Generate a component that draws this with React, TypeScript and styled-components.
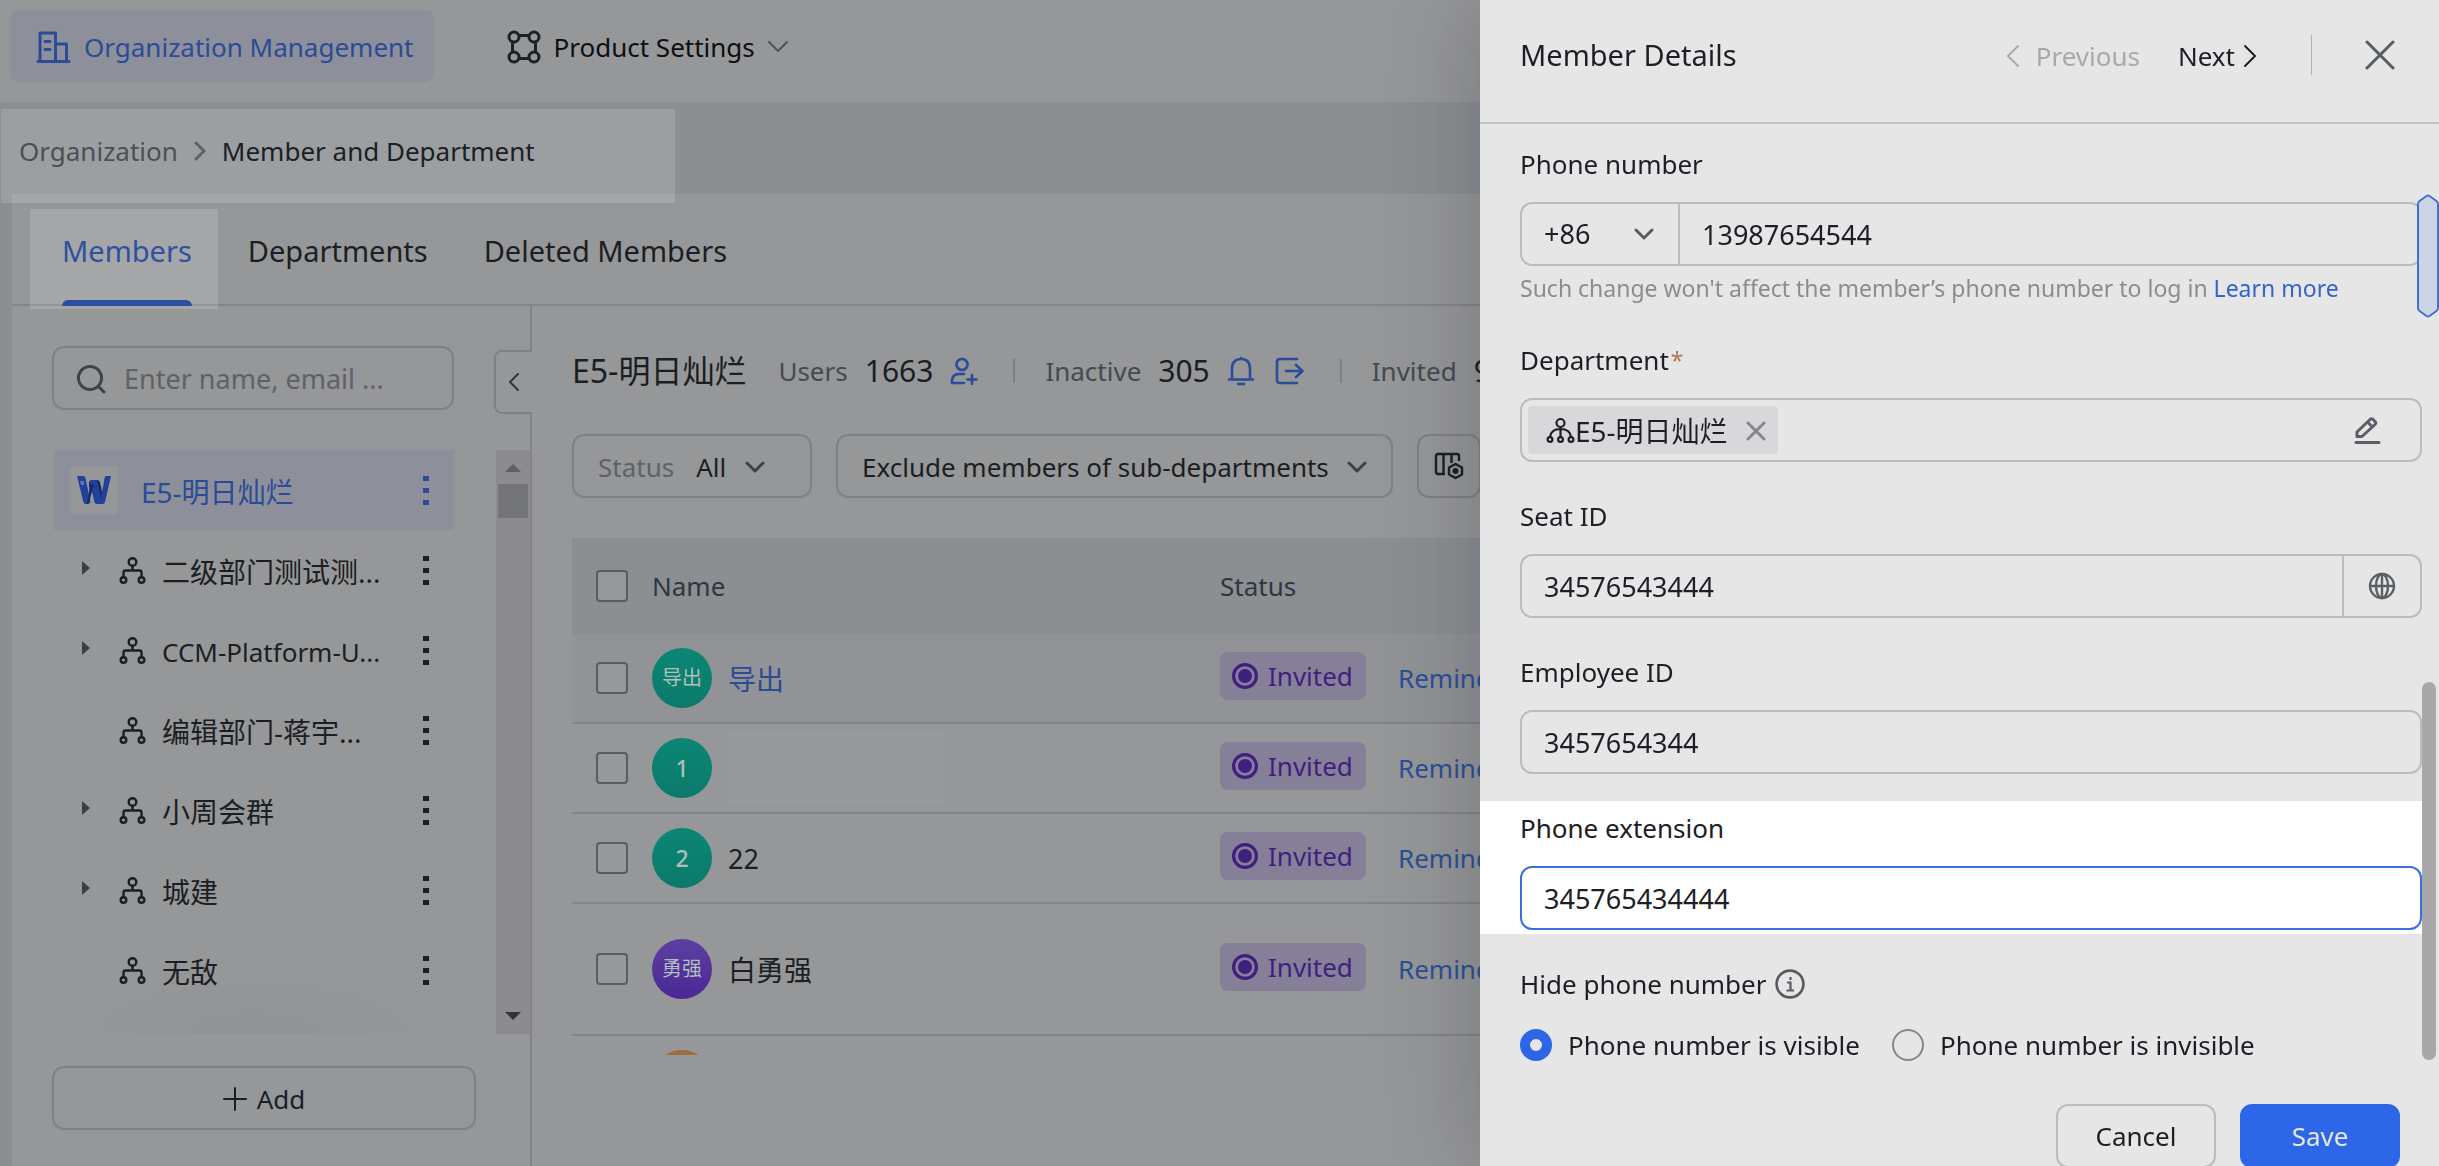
import React from 'react';
import styled, { createGlobalStyle, css } from 'styled-components';

const color = {
  surface: '#969798',
  canvas: '#8b8f92',
  selected: '#8d909b',
  ink: '#1b1e23',
  slate: '#2e3641',
  grey: '#454a50',
  muted: '#5e6267',
  line: '#7f8184',
  rule: '#838488',
  blue: '#2b4b97',
  chevron: '#3d4248',
  drawer: '#e6e6e6',
  drawerInk: '#1c2026',
  drawerLine: '#bbbcbe',
  primary: '#2e66e8',
};

const GlobalStyle = createGlobalStyle`
  * { box-sizing: border-box; }
  body {
    margin: 0;
    background: ${color.canvas};
    color: ${color.ink};
    font-family: "Noto Sans", "Noto Sans CJK SC", sans-serif;
    font-size: 26px;
    line-height: 40px;
  }
  button, input, select { font: inherit; color: inherit; }
  button { cursor: pointer; }
  svg { display: block; flex: none; }
`;

const Page = styled.div`
  display: flex;
  flex-direction: column;
  height: 100vh;
  overflow: hidden;
`;

/* ---------- top bar ---------- */

const TopBar = styled.nav`
  display: flex;
  gap: 48px;
  height: 102px;
  flex: none;
  padding: 10px;
  background: ${color.surface};
`;

const NavButton = styled.button<{ $active?: boolean }>`
  display: flex;
  align-items: center;
  gap: 13px;
  height: 72px;
  padding: 2px 20px 0 25px;
  border: 0;
  border-radius: 8px;
  background: ${p => (p.$active ? color.selected : 'transparent')};
  color: ${p => (p.$active ? color.blue : '#0d0f12')};
  white-space: nowrap;
`;

const NavChevron = styled.span`
  color: #50545a;
`;

const Breadcrumb = styled.div`
  position: relative;
  isolation: isolate;
  display: flex;
  align-items: center;
  gap: 16px;
  height: 92px;
  flex: none;
  padding: 6px 19px 0;
  color: ${color.muted};
`;

const CrumbLink = styled.a`
  color: #4b5055;
  text-decoration: none;
`;

const CrumbHere = styled.span`
  color: ${color.ink};
`;

const Glow = styled.div`
  position: absolute;
  z-index: -1;
  background: rgba(255, 255, 255, 0.15);
  pointer-events: none;
`;

const CrumbGlow = styled(Glow)`
  top: 7px;
  left: 1px;
  width: 674px;
  height: 94px;
`;

const TabGlow = styled(Glow)`
  top: 15px;
  left: -32px;
  right: -26px;
  bottom: -5px;
`;

/* ---------- panel ---------- */

const Panel = styled.div`
  display: flex;
  flex-direction: column;
  flex: 1;
  min-height: 0;
  margin-left: 12px;
  background: ${color.surface};
`;

const Tabs = styled.div`
  display: flex;
  gap: 56px;
  height: 112px;
  flex: none;
  padding-left: 50px;
  border-bottom: 2px solid #858688;
`;

const Tab = styled.button<{ $active?: boolean }>`
  position: relative;
  isolation: isolate;
  height: 110px;
  padding: 4px 0 0;
  border: 0;
  background: none;
  font-size: 29px;
  color: ${p => (p.$active ? '#2f51a0' : color.ink)};
  ${p => p.$active && css`
    &::after {
      content: '';
      position: absolute;
      left: 0;
      right: 0;
      bottom: -2px;
      height: 6px;
      border-radius: 6px 6px 0 0;
      background: #2b4f9f;
    }
  `}
`;

const Columns = styled.div`
  display: flex;
  flex: 1;
  min-height: 0;
`;

/* ---------- sidebar ---------- */

const Sidebar = styled.aside`
  position: relative;
  display: flex;
  flex-direction: column;
  width: 520px;
  flex: none;
  padding: 40px 0 36px 40px;
  border-right: 2px solid ${color.rule};
`;

const SearchBox = styled.label`
  display: flex;
  align-items: center;
  gap: 18px;
  width: 402px;
  height: 64px;
  flex: none;
  padding: 2px 24px 0 22px;
  border: 2px solid ${color.line};
  border-radius: 12px;
  color: #3f4348;
`;

const BareInput = styled.input`
  flex: 1;
  min-width: 0;
  padding: 0;
  border: 0;
  outline: 0;
  background: none;
  font-size: 27px;
  &::placeholder { color: ${color.muted}; opacity: 1; }
`;

const CollapseButton = styled.button`
  position: absolute;
  top: 44px;
  right: -2px;
  display: flex;
  align-items: center;
  width: 38px;
  height: 64px;
  padding: 0 0 0 13px;
  border: 2px solid ${color.line};
  border-right: 0;
  border-radius: 8px 0 0 8px;
  background: ${color.surface};
  color: #33363a;
`;

const TreeArea = styled.div`
  display: flex;
  justify-content: space-between;
  flex: 1;
  min-height: 0;
  margin: 40px 0 32px;
  padding-left: 2px;
`;

const Tree = styled.ul`
  width: 400px;
  margin: 0;
  padding: 0;
  list-style: none;
  overflow: hidden;
  background: radial-gradient(ellipse 60% 80px at 50% 100%, #909397, rgba(150, 151, 152, 0));
`;

const TreeRow = styled.li<{ $active?: boolean }>`
  display: flex;
  align-items: center;
  height: 80px;
  padding: 0 25px 0 ${p => (p.$active ? 16 : 28)}px;
  background: ${p => (p.$active ? color.selected : 'transparent')};
  color: ${p => (p.$active ? color.blue : color.ink)};
`;

const Caret = styled.span<{ $open: boolean }>`
  width: 8px;
  margin: 0 29px 4px 0;
  border-left: 8px solid #394048;
  border-top: 7px solid transparent;
  border-bottom: 7px solid transparent;
  visibility: ${p => (p.$open ? 'visible' : 'hidden')};
`;

const TreeName = styled.span<{ $cjk?: boolean; $root?: boolean }>`
  flex: 1;
  margin-left: ${p => (p.$root ? 23 : 16)}px;
  padding-top: 3px;
  font-size: ${p => (p.$cjk ? 28 : 26)}px;
  white-space: nowrap;
`;

const LogoTile = styled.span`
  display: flex;
  align-items: center;
  justify-content: center;
  width: 48px;
  height: 48px;
  border-radius: 4px;
  background: ${color.surface};
`;

const DotsButton = styled.button`
  padding: 0;
  border: 0;
  background: none;
`;

const ScrollRail = styled.div`
  display: flex;
  flex-direction: column;
  align-items: center;
  width: 34px;
  padding: 14px 0;
  background: #8c8b8d;
`;

const ScrollBlock = styled.div`
  width: 30px;
  height: 34px;
  margin: 12px 0 auto;
  background: #727476;
`;

const AddButton = styled.button`
  display: flex;
  align-items: center;
  justify-content: center;
  gap: 10px;
  width: 424px;
  height: 64px;
  flex: none;
  padding: 2px 0 0;
  border: 2px solid ${color.line};
  border-radius: 12px;
  background: none;
`;

/* ---------- main ---------- */

const Main = styled.main`
  display: flex;
  flex-direction: column;
  flex: 1;
  gap: 40px;
  min-width: 0;
  padding: 40px 24px 111px 40px;
  overflow: hidden;
`;

const Stats = styled.div`
  display: flex;
  align-items: center;
  height: 48px;
  flex: none;
  padding-top: 2px;
  white-space: nowrap;
`;

const DeptTitle = styled.h1`
  margin: 0 32px 0 0;
  font-size: 32px;
  font-weight: 400;
`;

const Stat = styled.div`
  display: flex;
  align-items: center;
  gap: 17px;
  color: ${color.grey};
  & + & {
    margin-left: 32px;
    padding-left: 32px;
    background: linear-gradient(#7e8083, #7e8083) left center / 2px 24px no-repeat;
  }
`;

const StatValue = styled.strong`
  font-size: 30px;
  font-weight: 400;
  color: ${color.ink};
`;

const IconButton = styled.button`
  padding: 0;
  border: 0;
  background: none;
  color: inherit;
`;

const StatIcon = styled(IconButton)`
  margin-right: 3px;
  color: #2b4b9c;
`;

const Filters = styled.div`
  display: flex;
  gap: 24px;
  flex: none;
`;

const SelectBox = styled.label`
  display: flex;
  align-items: center;
  gap: 18px;
  height: 64px;
  padding: 2px 24px 0;
  border: 2px solid ${color.line};
  border-radius: 12px;
  color: ${color.chevron};
`;

const StatusBox = styled(SelectBox)`
  width: 240px;
`;

const FilterName = styled.span`
  margin-right: 4px;
  color: ${color.muted};
`;

const PlainSelect = styled.select`
  appearance: none;
  padding: 0;
  border: 0;
  outline: 0;
  background: none;
  color: ${color.ink};
`;

const SquareButton = styled.button`
  display: flex;
  align-items: center;
  justify-content: center;
  width: 64px;
  height: 64px;
  padding: 0;
  border: 2px solid ${color.line};
  border-radius: 12px;
  background: none;
`;

const TableArea = styled.div`
  flex: 1;
  min-height: 0;
  overflow: hidden;
`;

const Table = styled.table`
  width: 100%;
  border-collapse: separate;
  border-spacing: 0;
  table-layout: fixed;
  text-align: left;
`;

const HeadCell = styled.th`
  height: 96px;
  padding: 0;
  background: #8b8f92;
  color: ${color.slate};
  font-weight: 400;
`;

const Row = styled.tr<{ $hover?: boolean; $tall?: boolean }>`
  background: ${p => (p.$hover ? '#919396' : 'transparent')};
  & > td { height: ${p => (p.$tall ? 132 : 90)}px; }
`;

const Cell = styled.td`
  padding: 0;
  border-bottom: 2px solid ${color.rule};
`;

const Check = styled.input`
  display: block;
  appearance: none;
  width: 32px;
  height: 32px;
  margin: 0 0 0 24px;
  border: 2px solid #5a5c63;
  border-radius: 4px;
  background: #979899;
`;

const Person = styled.div`
  display: flex;
  align-items: center;
  gap: 16px;
`;

const Avatar = styled.span<{ $tone: string; $cjk?: boolean }>`
  display: flex;
  align-items: center;
  justify-content: center;
  width: 60px;
  height: 60px;
  border-radius: 50%;
  background: ${p => p.$tone};
  color: #aebfbe;
  font-size: ${p => (p.$cjk ? 20 : 23)}px;
  font-weight: ${p => (p.$cjk ? 400 : 500)};
`;

const PersonName = styled.span<{ $link?: boolean; $cjk?: boolean }>`
  padding-top: 2px;
  font-size: ${p => (p.$cjk ? 28 : 27)}px;
  color: ${p => (p.$link ? '#2d4a96' : color.ink)};
`;

const Blank = styled.span`
  width: 216px;
  height: 70px;
  background: #98999a;
`;

const Badge = styled.span`
  display: flex;
  align-items: center;
  gap: 10px;
  width: 146px;
  height: 48px;
  margin-bottom: 4px;
  padding: 0 12px;
  border-radius: 8px;
  background: #857f97;
  color: #3f1f80;
`;

const TextLink = styled.a`
  color: #2b4f98;
  text-decoration: none;
`;

/* ---------- drawer ---------- */

const Drawer = styled.section`
  position: fixed;
  top: 0;
  right: 0;
  bottom: 0;
  z-index: 2;
  width: 959px;
  max-width: 100%;
  overflow: hidden;
  background: ${color.drawer};
  color: ${color.drawerInk};
  box-shadow: 0 0 96px rgba(30, 30, 45, 0.26);
`;

const DrawerHead = styled.header`
  display: flex;
  align-items: center;
  height: 124px;
  padding: 0 44px 12px 40px;
  border-bottom: 2px solid #c4c4c5;
`;

const DrawerTitle = styled.h2`
  margin: 0 auto 0 0;
  font-size: 29px;
  font-weight: 400;
`;

const StepButton = styled.button`
  display: flex;
  align-items: center;
  gap: 8px;
  margin-right: 38px;
  padding: 2px 0 0;
  border: 0;
  background: none;
  &:disabled { gap: 16px; color: #a8a9ab; }
`;

const HeadRule = styled.span`
  width: 1px;
  height: 40px;
  margin: 0 53px 0 16px;
  background: #b0b1b2;
`;

const CloseButton = styled(IconButton)`
  color: #575b62;
`;

const Form = styled.form`
  display: flex;
  flex-direction: column;
  gap: 34px;
  padding: 20px 17px 0 40px;
`;

const Field = styled.div<{ $spotlight?: boolean }>`
  ${p => p.$spotlight && css`
    margin: -7px -4px -4px -40px;
    padding: 7px 4px 4px 40px;
    background: #ffffff;
  `}
`;

const FieldLabel = styled.label`
  display: flex;
  align-items: center;
  margin-bottom: 18px;
`;

const Required = styled.span`
  margin-left: 2px;
  font-size: 23px;
  color: #b5764f;
`;

const Box = styled.div<{ $focus?: boolean }>`
  display: flex;
  align-items: center;
  height: 64px;
  border: 2px solid ${p => (p.$focus ? '#3a6fe0' : color.drawerLine)};
  border-radius: 12px;
`;

const FieldInput = styled(BareInput)`
  height: 60px;
  padding: 0 22px;
`;

const CodeSelect = styled.label`
  display: flex;
  align-items: center;
  justify-content: space-between;
  width: 158px;
  height: 60px;
  padding: 0 24px 0 22px;
  border-right: 2px solid ${color.drawerLine};
  color: #575b62;
`;

const DrawerSelect = styled(PlainSelect)`
  font-size: 27px;
  color: ${color.drawerInk};
`;

const Helper = styled.p`
  margin: 4px 0 0;
  font-size: 23px;
  line-height: 36px;
  color: #8c8c8d;
`;

const HelperLink = styled.a`
  color: #3464c9;
  text-decoration: none;
`;

const Chip = styled.span`
  display: flex;
  align-items: center;
  height: 48px;
  margin: 0 auto 0 6px;
  padding: 2px 12px 0 18px;
  border-radius: 4px;
  background: #d8d8da;
  font-size: 28px;
`;

const ChipRemove = styled(IconButton)`
  margin-left: 18px;
  color: #868890;
`;

const EditButton = styled(IconButton)`
  margin-right: 38px;
  color: #5b5f66;
`;

const GlobeButton = styled(IconButton)`
  display: flex;
  align-items: center;
  justify-content: center;
  width: 78px;
  height: 60px;
  border-left: 2px solid ${color.drawerLine};
  color: #5b5f66;
`;

const FieldSet = styled.fieldset`
  min-width: 0;
  margin: 0;
  padding: 0;
  border: 0;
`;

const Legend = styled.legend`
  display: flex;
  align-items: center;
  gap: 8px;
  margin-bottom: 18px;
  padding: 0;
`;

const Radios = styled.div`
  display: flex;
  gap: 32px;
`;

const RadioLabel = styled.label`
  display: flex;
  align-items: center;
  gap: 16px;
  height: 46px;
`;

const Radio = styled.input`
  appearance: none;
  width: 32px;
  height: 32px;
  margin: 0;
  border: 2px solid #85878c;
  border-radius: 50%;
  background: ${color.drawer};
  &:checked { border: 10px solid ${color.primary}; }
`;

const Footer = styled.footer`
  display: flex;
  justify-content: flex-end;
  gap: 24px;
  margin: 2px 22px 0 0;
`;

const FooterButton = styled.button<{ $primary?: boolean }>`
  width: 160px;
  height: 64px;
  padding: 0;
  border: 2px solid ${p => (p.$primary ? color.primary : color.drawerLine)};
  border-radius: 12px;
  background: ${p => (p.$primary ? color.primary : 'transparent')};
  color: ${p => (p.$primary ? color.drawer : color.drawerInk)};
`;

const DrawerScroll = styled.div`
  position: absolute;
  top: 682px;
  right: 3px;
  width: 14px;
  height: 378px;
  border-radius: 7px;
  background: #a8a8aa;
`;

const Handle = styled.svg`
  position: absolute;
  top: 194px;
  right: 0;
`;

/* ---------- drawings ---------- */

type StrokeProps = { d: string; w: number; h: number; s?: number };

const Stroke = ({ d, w, h, s = 3 }: StrokeProps) => (
  <svg width={w} height={h} viewBox={`0 0 ${w} ${h}`} fill="none" stroke="currentColor" strokeWidth={s} strokeLinecap="round" strokeLinejoin="round" aria-hidden="true">
    <path d={d} />
  </svg>
);

const ChevronDown = () => <Stroke w={20} h={12} d="M2 2l8 8 8-8" />;

const BuildingIcon = () => (
  <Stroke w={36} h={34} s={3} d="M3 31.500h31M5 31V3h15.500v28M20.500 14h11V31M10 11.500h5M10 19.500h5" />
);

const NodesIcon = () => (
  <svg width="34" height="34" viewBox="0 0 34 34" fill="none" stroke="#1d2025" strokeWidth="3" aria-hidden="true">
    <circle cx="7" cy="7" r="5" /><circle cx="27" cy="7" r="5" /><circle cx="7" cy="27" r="5" /><circle cx="27" cy="27" r="5" />
    <path d="M12 5.500h10M12 28.500h10M5.500 12v10M28.500 12v10" />
  </svg>
);

const DeptIcon = () => (
  <svg width="27" height="28" viewBox="0 0 27 28" fill="none" stroke="currentColor" strokeWidth="2.400" aria-hidden="true">
    <circle cx="13.500" cy="6" r="3.800" /><circle cx="4.500" cy="24" r="2.800" /><circle cx="22.500" cy="24" r="2.800" />
    <path d="M13.500 10v4.500M4.500 21v-4.500q0-2 2-2h14q2 0 2 2V21" />
  </svg>
);

const ChipIcon = () => (
  <svg width="29" height="28" viewBox="0 0 29 28" fill="none" stroke="currentColor" strokeWidth="2.200" aria-hidden="true">
    <circle cx="14.500" cy="6" r="4" /><circle cx="4" cy="22.500" r="2.400" /><circle cx="14.500" cy="22.500" r="2.400" /><circle cx="25" cy="22.500" r="2.400" />
    <path d="M14.500 10v10M4 20q1-8 10.500-8T25 20" />
  </svg>
);

const Dots = () => (
  <svg width="6" height="29" viewBox="0 0 6 29" fill="currentColor" aria-hidden="true">
    <path d="M0 0h6v5H0zM0 12h6v5H0zM0 24h6v5H0z" />
  </svg>
);

const WLogo = () => (
  <svg width="34" height="28" viewBox="0 0 34 28" aria-hidden="true">
    <path d="M12 6q1-2 3-2h5q2 0 3 2l4 20q-1 2-3 2h-3L12 10z" fill="#16296e" />
    <path d="M0 0h6q2 0 2.500 2l5 24q-.6 2-2.500 2H9q-2 0-2.600-2z" fill="#23419a" />
    <path d="M13 6q.6-2 2.500-2H20l5 22q-.6 2-2.500 2H20q-2 0-2.600-2z" fill="#23419a" />
    <path d="M17 8l-5 18q-.6 2-3 2 3-4 3.500-18zM26 10l1 16q-1 2-3 2z" fill="#16296e" />
    <path d="M27.500 2Q28 0 30 0h4l-6 26q-.6 2-2.500 2h-2z" fill="#23419a" />
    <path d="M3 5h4v4H4z" fill="#5f74b4" />
  </svg>
);

const ColumnsIcon = () => (
  <svg width="30" height="28" viewBox="0 0 30 28" fill="none" stroke="#1b1e23" strokeWidth="2.400" strokeLinejoin="round" aria-hidden="true">
    <path d="M11 22H4q-2 0-2-2V4q0-2 2-2h19q2 0 2 2v5M9.500 2v20M17.500 2v9" />
    <path d="M21.500 12l6.500 3.500v7L21.500 26 15 22.500v-7z" />
    <circle cx="21.500" cy="19" r="1.800" fill="#1b1e23" />
  </svg>
);

const TargetIcon = () => (
  <svg width="26" height="26" viewBox="0 0 26 26" fill="none" aria-hidden="true">
    <circle cx="13" cy="13" r="11.400" stroke="#3f1f80" strokeWidth="3.200" />
    <circle cx="13" cy="13" r="7" fill="#3f1f80" />
  </svg>
);

const GlobeIcon = () => (
  <svg width="28" height="28" viewBox="0 0 28 28" fill="none" stroke="currentColor" strokeWidth="2.400" aria-hidden="true">
    <circle cx="14" cy="14" r="12" /><ellipse cx="14" cy="14" rx="6" ry="12" /><path d="M2 14h24M14 2v24" />
  </svg>
);

const InfoIcon = () => (
  <svg width="30" height="30" viewBox="0 0 30 30" fill="none" stroke="#575b62" strokeWidth="2.600" aria-hidden="true">
    <circle cx="15" cy="15" r="13.400" />
    <path d="M15.500 8v3M12 13.500h3.500V21M11.500 21.500h7.500" strokeWidth="2.200" />
  </svg>
);

/* ---------- data ---------- */

const departments = [
  { name: '二级部门测试测...', open: true, cjk: true },
  { name: 'CCM-Platform-U...', open: true, cjk: false },
  { name: '编辑部门-蒋宇...', open: false, cjk: true },
  { name: '小周会群', open: true, cjk: true },
  { name: '城建', open: true, cjk: true },
  { name: '无敌', open: false, cjk: true },
];

const green = 'linear-gradient(#0c8675, #0b7a6b)';
const purple = 'linear-gradient(#5d3fa0, #4b2896)';

const members = [
  { initials: '导出', name: '导出', tone: green, cjk: true, hover: true },
  { initials: '1', name: '', tone: green },
  { initials: '2', name: '22', tone: green },
  { initials: '勇强', name: '白勇强', tone: purple, cjk: true, tall: true },
];

/* ---------- sections ---------- */

const DepartmentTree = () => (
  <Sidebar>
    <SearchBox>
      <Stroke w={30} h={30} s={3} d="M14 2.500a11.500 11.500 0 1 0 .01 0M22.500 22.500l5.500 5.500" />
      <BareInput type="text" placeholder="Enter name, email ..." aria-label="Search" />
    </SearchBox>
    <CollapseButton aria-label="Collapse"><Stroke w={10} h={18} s={2} d="M9 1L1 9l8 8" /></CollapseButton>
    <TreeArea>
      <Tree>
        <TreeRow $active>
          <LogoTile><WLogo /></LogoTile>
          <TreeName $cjk $root>E5-明日灿烂</TreeName>
          <DotsButton aria-label="More"><Dots /></DotsButton>
        </TreeRow>
        {departments.map(d => (
          <TreeRow key={d.name}>
            <Caret $open={d.open} />
            <DeptIcon />
            <TreeName $cjk={d.cjk}>{d.name}</TreeName>
            <DotsButton aria-label="More"><Dots /></DotsButton>
          </TreeRow>
        ))}
      </Tree>
      <ScrollRail>
        <svg width="16" height="8" viewBox="0 0 16 8"><path d="M8 0l8 8H0z" fill="#5e6062" /></svg>
        <ScrollBlock />
        <svg width="16" height="8" viewBox="0 0 16 8"><path d="M8 8l8-8H0z" fill="#303436" /></svg>
      </ScrollRail>
    </TreeArea>
    <AddButton><Stroke w={24} h={24} s={2} d="M12 1v22M1 12h22" />Add</AddButton>
  </Sidebar>
);

const MemberTable = () => (
  <TableArea>
    <Table>
      <colgroup>
        <col style={{ width: 80 }} /><col style={{ width: 568 }} /><col style={{ width: 178 }} /><col />
      </colgroup>
      <thead>
        <tr>
          <HeadCell><Check type="checkbox" aria-label="Select all" /></HeadCell>
          <HeadCell>Name</HeadCell>
          <HeadCell>Status</HeadCell>
          <HeadCell />
        </tr>
      </thead>
      <tbody>
        {members.map(m => (
          <Row key={m.initials} $hover={m.hover} $tall={m.tall}>
            <Cell><Check type="checkbox" aria-label={`Select ${m.initials}`} /></Cell>
            <Cell>
              <Person>
                <Avatar $tone={m.tone} $cjk={m.cjk}>{m.initials}</Avatar>
                {m.name ? <PersonName $link={m.hover} $cjk={m.cjk}>{m.name}</PersonName> : <Blank />}
              </Person>
            </Cell>
            <Cell><Badge><TargetIcon />Invited</Badge></Cell>
            <Cell><TextLink href="#remind">Remind</TextLink></Cell>
          </Row>
        ))}
        <Row>
          <Cell />
          <Cell><Avatar $tone="#a06d3c" /></Cell>
          <Cell />
          <Cell />
        </Row>
      </tbody>
    </Table>
  </TableArea>
);

const MemberDrawer = () => (
  <Drawer aria-label="Member Details">
    <DrawerHead>
      <DrawerTitle>Member Details</DrawerTitle>
      <StepButton disabled><Stroke w={14} h={24} s={2} d="M12 2L2 12l10 10" />Previous</StepButton>
      <StepButton>Next<Stroke w={14} h={24} s={2} d="M2 2l10 10L2 22" /></StepButton>
      <HeadRule />
      <CloseButton aria-label="Close"><Stroke w={30} h={30} s={3} d="M2 2l26 26M28 2L2 28" /></CloseButton>
    </DrawerHead>
    <Form>
      <Field>
        <FieldLabel htmlFor="phone">Phone number</FieldLabel>
        <Box>
          <CodeSelect>
            <DrawerSelect aria-label="Country code" defaultValue="+86"><option>+86</option></DrawerSelect>
            <ChevronDown />
          </CodeSelect>
          <FieldInput id="phone" type="text" defaultValue="13987654544" />
        </Box>
        <Helper>Such change won't affect the member’s phone number to log in <HelperLink href="#learn">Learn more</HelperLink></Helper>
      </Field>
      <Field>
        <FieldLabel as="div">Department<Required>*</Required></FieldLabel>
        <Box>
          <Chip>
            <ChipIcon />E5-明日灿烂
            <ChipRemove type="button" aria-label="Remove"><Stroke w={20} h={20} s={3} d="M2 2l16 16M18 2L2 18" /></ChipRemove>
          </Chip>
          <EditButton type="button" aria-label="Edit">
            <Stroke w={28} h={28} s={3} d="M2 26.500h23M3 20.500v-4.500L16 3.500q1.500-1.500 3 0l2 2q1.500 1.500 0 3L8 20.500zM13.500 6l5 5" />
          </EditButton>
        </Box>
      </Field>
      <Field>
        <FieldLabel htmlFor="seat">Seat ID</FieldLabel>
        <Box>
          <FieldInput id="seat" type="text" defaultValue="34576543444" />
          <GlobeButton type="button" aria-label="Language"><GlobeIcon /></GlobeButton>
        </Box>
      </Field>
      <Field>
        <FieldLabel htmlFor="employee">Employee ID</FieldLabel>
        <Box><FieldInput id="employee" type="text" defaultValue="3457654344" /></Box>
      </Field>
      <Field $spotlight>
        <FieldLabel htmlFor="extension">Phone extension</FieldLabel>
        <Box $focus><FieldInput id="extension" type="text" defaultValue="345765434444" /></Box>
      </Field>
      <FieldSet>
        <Legend>Hide phone number<InfoIcon /></Legend>
        <Radios>
          <RadioLabel><Radio type="radio" name="visibility" defaultChecked />Phone number is visible</RadioLabel>
          <RadioLabel><Radio type="radio" name="visibility" />Phone number is invisible</RadioLabel>
        </Radios>
      </FieldSet>
      <Footer>
        <FooterButton type="button">Cancel</FooterButton>
        <FooterButton type="button" $primary>Save</FooterButton>
      </Footer>
    </Form>
    <DrawerScroll />
    <Handle width="22" height="124" viewBox="0 0 22 124" aria-hidden="true">
      <path d="M1 10Q1 8 2.500 7L9.500 2Q11 1 12.500 2L19.500 7Q21 8 21 10V114Q21 116 19.500 117L12.500 122Q11 123 9.500 122L2.500 117Q1 116 1 114Z" fill="#ccd4e6" stroke="#4272cf" strokeWidth="2" />
    </Handle>
  </Drawer>
);

export default function App() {
  return (
    <Page>
      <GlobalStyle />
      <TopBar>
        <NavButton $active><BuildingIcon />Organization Management</NavButton>
        <NavButton><NodesIcon />Product Settings<NavChevron><Stroke w={20} h={12} s={2} d="M1 1l9 9 9-9" /></NavChevron></NavButton>
      </TopBar>
      <Breadcrumb>
        <CrumbLink href="#organization">Organization</CrumbLink>
        <Stroke w={12} h={20} s={3} d="M2 2l8 8-8 8" />
        <CrumbHere>Member and Department</CrumbHere>
        <CrumbGlow />
      </Breadcrumb>
      <Panel>
        <Tabs>
          <Tab $active>Members<TabGlow /></Tab>
          <Tab>Departments</Tab>
          <Tab>Deleted Members</Tab>
        </Tabs>
        <Columns>
          <DepartmentTree />
          <Main>
            <Stats>
              <DeptTitle>E5-明日灿烂</DeptTitle>
              <Stat>
                Users<StatValue>1663</StatValue>
                <StatIcon aria-label="Add user">
                  <Stroke w={28} h={28} s={2.6} d="M12 2a5.500 5.500 0 1 0 .01 0M14 17H9q-7 0-7 7.500V26h12M22 18v9M17.500 22.500h9" />
                </StatIcon>
              </Stat>
              <Stat>
                Inactive<StatValue>305</StatValue>
                <StatIcon aria-label="Notify">
                  <Stroke w={28} h={30} s={2.6} d="M2 23.500h24M5 23V13q0-10 9-10t9 10v10M11 28h6M14 3V2" />
                </StatIcon>
                <StatIcon aria-label="Export">
                  <Stroke w={30} h={28} s={2.6} d="M22 2H5Q2 2 2 5v18q0 3 3 3h17M11 14h16M21 8l6.500 6-6.500 6" />
                </StatIcon>
              </Stat>
              <Stat>Invited<StatValue>9</StatValue></Stat>
            </Stats>
            <Filters>
              <StatusBox>
                <FilterName>Status</FilterName>
                <PlainSelect defaultValue="All"><option>All</option></PlainSelect>
                <ChevronDown />
              </StatusBox>
              <SelectBox>
                <PlainSelect aria-label="Scope" defaultValue="x">
                  <option value="x">Exclude members of sub-departments</option>
                </PlainSelect>
                <ChevronDown />
              </SelectBox>
              <SquareButton aria-label="Columns"><ColumnsIcon /></SquareButton>
            </Filters>
            <MemberTable />
          </Main>
        </Columns>
      </Panel>
      <MemberDrawer />
    </Page>
  );
}
